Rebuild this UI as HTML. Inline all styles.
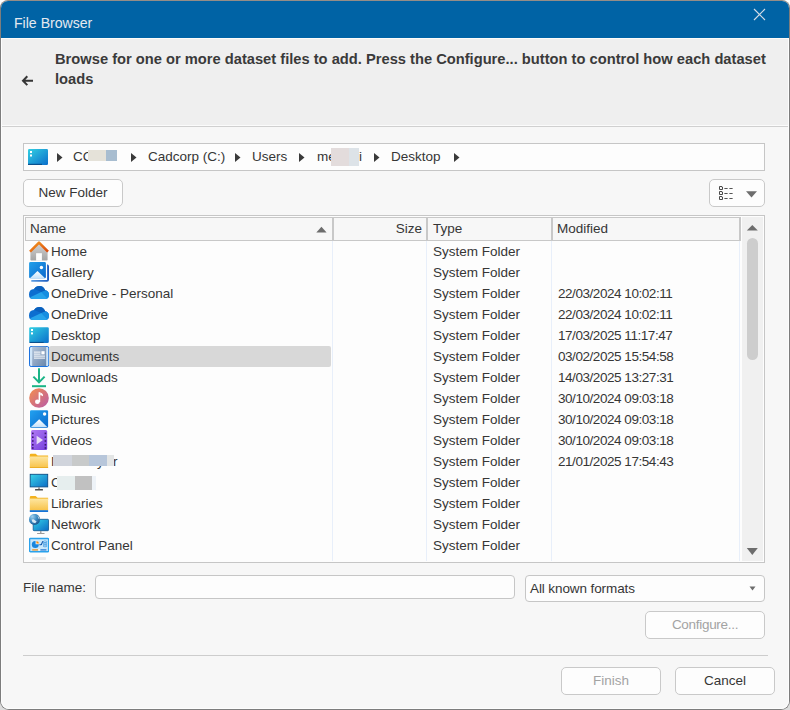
<!DOCTYPE html>
<html><head><meta charset="utf-8">
<style>
*{margin:0;padding:0;box-sizing:border-box}
html,body{width:790px;height:710px;overflow:hidden;background:#fff}
body{font-family:"Liberation Sans",sans-serif;font-size:13.5px;color:#363636;position:relative}
.a{position:absolute}
#win{left:0;top:0;width:790px;height:710px;border:1px solid #7d7d7d;border-top-color:#958d87;border-radius:8px 8px 9px 9px;overflow:hidden;background:#f7f7f7}
#title{left:1px;top:1px;width:788px;height:37px;background:#0063a5;border-radius:7px 7px 0 0}
#title .t{left:13px;top:14px;font-size:14.1px;color:#e4e9f0;line-height:17px}
#hdr{left:1px;top:38px;width:788px;height:88px;background:#efefef;border-top:1px solid #fdfbf8;border-bottom:1px solid #fbfbfb;box-shadow:0 1px 0 #d0d0d0}
#hl{left:0;top:124px;width:788px;height:1px;background:#fcfcfc}
.bold{font-weight:bold;font-size:14.7px;color:#3a3a3a;line-height:20px}
.box{background:#fdfdfd;border:1px solid #c6c6c6}
.btn{background:#fdfdfd;border:1px solid #c9c9c9;border-radius:5px;text-align:center;line-height:26px}
.tri-r{width:0;height:0;border-top:4.5px solid transparent;border-bottom:4.5px solid transparent;border-left:5px solid #3c3c3c}
.row{left:0;height:21px;width:738px}
.row .ic{left:4px;top:0;width:20px;height:20px}
.row .n{left:26px;top:2px;line-height:17px;white-space:nowrap}
.row .ty{left:408px;top:2px;line-height:17px}
.row .md{left:533px;top:2px;line-height:17px}
.hd{line-height:17px;white-space:nowrap}
.rt{line-height:17px;white-space:nowrap}
</style></head><body>
<div class="a" style="left:0;top:700px;width:12px;height:10px;background:#dcdcdc"></div>
<div class="a" style="left:778px;top:700px;width:12px;height:10px;background:#dcdcdc"></div>
<div id="win" class="a"></div>
  <div id="title" class="a"><div class="t a">File Browser</div>
    <svg class="a" style="left:752px;top:7px" width="13" height="13" viewBox="0 0 13 13"><path d="M1 1L12 12M12 1L1 12" stroke="#d3dce7" stroke-width="1.15"/></svg>
  </div>
  <div id="hdr" class="a"></div>
  <div class="a" style="left:1px;top:38px;width:788px;height:671px;border:1px solid #fdfdfd;border-top:none;border-radius:0 0 8px 8px"></div>
  <div class="a bold" style="left:55px;top:49px;width:730px">Browse for one or more dataset files to add. Press the Configure... button to control how each dataset loads</div>

  <svg class="a" style="left:20px;top:74px" width="16" height="14" viewBox="20 74 16 14"><path d="M33 80.7H23.6M27.3 76.3L23 80.7L27.3 85.1" fill="none" stroke="#363636" stroke-width="2"/></svg>
  <!-- breadcrumb -->
  <div class="a box" style="left:23px;top:143px;width:742px;height:28px"></div>
  <svg class="a" style="left:27px;top:148px" width="22" height="18" viewBox="27 148 22 18">
    <defs><linearGradient id="dg" x1="0" y1="0" x2="1" y2="1"><stop offset="0" stop-color="#33d0e2"/><stop offset="1" stop-color="#0b6ecb"/></linearGradient></defs>
    <rect x="28" y="149" width="20" height="16" rx="1.2" fill="url(#dg)"/>
    <rect x="28" y="163.8" width="14" height="1.2" fill="#0a4f8c"/>
    <rect x="30" y="151" width="2" height="2" fill="#fff"/><rect x="30" y="154.5" width="2" height="2" fill="#fff"/>
  </svg>
  <svg class="a" style="left:57px;top:152px" width="7" height="11" viewBox="57 152 7 11"><path d="M57 153L62.5 157.5L57 162Z" fill="#3a3a3a"/></svg>
  <div class="a" style="left:73px;top:148px;line-height:17px">CC</div>
  <div class="a" style="left:88px;top:150px;width:18px;height:11px;background:#e5e2d9"></div>
  <div class="a" style="left:106px;top:150px;width:11px;height:11px;background:#a8bdd0"></div>
  <svg class="a" style="left:131px;top:152px" width="7" height="11" viewBox="131 152 7 11"><path d="M131 153L136.5 157.5L131 162Z" fill="#3a3a3a"/></svg>
  <div class="a" style="left:148px;top:148px;line-height:17px">Cadcorp (C:)</div>
  <svg class="a" style="left:235px;top:152px" width="7" height="11" viewBox="235 152 7 11"><path d="M235 153L240.5 157.5L235 162Z" fill="#3a3a3a"/></svg>
  <div class="a" style="left:252px;top:148px;line-height:17px">Users</div>
  <svg class="a" style="left:299px;top:152px" width="7" height="11" viewBox="299 152 7 11"><path d="M299 153L304.5 157.5L299 162Z" fill="#3a3a3a"/></svg>
  <div class="a" style="left:317px;top:148px;line-height:17px">me</div>
  <div class="a" style="left:331px;top:148px;width:18px;height:18px;background:#e3dcdc"></div>
  <div class="a" style="left:349px;top:148px;width:10px;height:18px;background:#dde3e8"></div>
  <div class="a" style="left:359px;top:148px;line-height:17px">i</div>
  <svg class="a" style="left:374px;top:152px" width="7" height="11" viewBox="374 152 7 11"><path d="M374 153L379.5 157.5L374 162Z" fill="#3a3a3a"/></svg>
  <div class="a" style="left:391px;top:148px;line-height:17px">Desktop</div>
  <svg class="a" style="left:454px;top:152px" width="7" height="11" viewBox="454 152 7 11"><path d="M454 153L459.5 157.5L454 162Z" fill="#3a3a3a"/></svg>
  <!-- toolbar -->
  <div class="a btn" style="left:23px;top:179px;width:100px;height:28px">New Folder</div>
  <div class="a btn" style="left:709px;top:179px;width:56px;height:28px"></div>
  <svg class="a" style="left:717px;top:185px" width="42" height="16" viewBox="717 185 42 16">
    <path d="M719.5 186.5H722L722.5 187V189.5H719.5Z M721.6 187L722.3 187.7 M719.5 191.5H722L722.5 192V194.5H719.5Z M721.6 192L722.3 192.7 M719.5 196.5H722L722.5 197V199.5H719.5Z M721.6 197L722.3 197.7 " fill="none" stroke="#4a4a4a" stroke-width="1"/>
    <g fill="#555"><rect x="724.2" y="188" width="3.6" height="1" rx=".4"/><rect x="729.2" y="188" width="3.6" height="1" rx=".4"/><rect x="724.2" y="193" width="3.6" height="1" rx=".4"/><rect x="729.2" y="193" width="3.6" height="1" rx=".4"/><rect x="724.2" y="198" width="3.6" height="1" rx=".4"/><rect x="729.2" y="198" width="3.6" height="1" rx=".4"/></g>
    <path d="M746 191.3h11l-5.5 6.2z" fill="#6d6d6d"/>
  </svg>
<!-- list -->
<div class="a box" style="left:23px;top:215px;width:742px;height:348px;background:#fdfdfd"></div>
<div class="a" style="left:25px;top:217px;width:716px;height:24px;background:#f7f7f7;border:1px solid #c8c8c8"></div>
<div class="a" style="left:332px;top:217px;width:2px;height:24px;background:#c8c8c8"></div>
<div class="a" style="left:332px;top:241px;width:1px;height:320px;background:#e8effa"></div>
<div class="a" style="left:426px;top:217px;width:2px;height:24px;background:#c8c8c8"></div>
<div class="a" style="left:426px;top:241px;width:1px;height:320px;background:#e8effa"></div>
<div class="a" style="left:551px;top:217px;width:2px;height:24px;background:#c8c8c8"></div>
<div class="a" style="left:551px;top:241px;width:1px;height:320px;background:#e8effa"></div>
<div class="a" style="left:739px;top:217px;width:2px;height:24px;background:#c8c8c8"></div>
<div class="a" style="left:739px;top:241px;width:1px;height:320px;background:#e8effa"></div>
<div class="a hd" style="left:30px;top:220px">Name</div>
<svg class="a" style="left:315px;top:226px" width="13" height="8" viewBox="315 226 13 8"><path d="M316.3 232.6H326.6L321.45 226.7Z" fill="#6d6d6d"/></svg>
<div class="a hd" style="left:334px;top:220px;width:88px;text-align:right">Size</div>
<div class="a hd" style="left:433px;top:220px">Type</div>
<div class="a hd" style="left:557px;top:220px">Modified</div>
<div class="a" style="left:742px;top:217px;width:21px;height:344px;background:#f0f0f0"></div>
<svg class="a" style="left:745px;top:223px" width="15" height="10" viewBox="745 223 15 10"><path d="M746.8 230.5H757.8L752.3 224.9Z" fill="#6d6d6d"/></svg>
<div class="a" style="left:747px;top:238px;width:11px;height:122px;background:#cdcdcd;border-radius:5.5px"></div>
<svg class="a" style="left:745px;top:546px" width="15" height="10" viewBox="745 546 15 10"><path d="M746.8 548H757.8L752.3 555Z" fill="#6d6d6d"/></svg>
<div class="a" style="left:49px;top:346px;width:282px;height:21px;background:#d8d8d8;border-radius:2px"></div>
<svg class="a" style="left:29px;top:241px" width="20" height="21" viewBox="0 0 20 21"><defs><linearGradient id="hg" x1="0" y1="0" x2="0" y2="1"><stop offset="0" stop-color="#d2d2d2"/><stop offset="1" stop-color="#a4a4a4"/></linearGradient><linearGradient id="hr" x1="0" y1="0" x2="1" y2="1"><stop offset="0" stop-color="#f59a20"/><stop offset="1" stop-color="#d9480c"/></linearGradient></defs>
<path d="M10 2.5L18.6 10.5V18.8Q18.6 19.6 17.8 19.6H2.2Q1.4 19.6 1.4 18.8V10.5Z" fill="url(#hg)"/><rect x="7.1" y="12.2" width="5.8" height="7.5" fill="#fdfdfd"/>
<path d="M1 10.6L10 1.6L19 10.6" fill="none" stroke="url(#hr)" stroke-width="2.6" stroke-linejoin="round"/></svg>
<div class="a rt" style="left:51px;top:243px">Home</div>
<div class="a rt" style="left:433px;top:243px">System Folder</div>
<svg class="a" style="left:29px;top:262px" width="20" height="21" viewBox="0 0 20 21"><defs><linearGradient id="gg" x1="0" y1="0" x2="1" y2="1"><stop offset="0" stop-color="#22a0ea"/><stop offset="1" stop-color="#0a66cc"/></linearGradient><linearGradient id="gm" x1="0" y1="0" x2="0" y2="1"><stop offset="0" stop-color="#ffffff"/><stop offset="1" stop-color="#c4e2fa"/></linearGradient><linearGradient id="gb" x1="0" y1="0" x2="1" y2="0"><stop offset="0" stop-color="#5d9de2"/><stop offset="1" stop-color="#1758bd"/></linearGradient></defs>
<path d="M18.1 2.3Q20 2.6 20 4.5V17.8Q20 19.7 18.1 19.7H2.3L2.3 17.9H18.1Z" fill="url(#gb)"/>
<rect x="0.1" y="0.1" width="16.8" height="16.2" rx="1.4" fill="url(#gg)"/>
<path d="M0.9 16.3L8.5 8.9L16.1 16.3Z" fill="url(#gm)"/><circle cx="12.4" cy="5.5" r="1.7" fill="#fff"/></svg>
<div class="a rt" style="left:51px;top:264px">Gallery</div>
<div class="a rt" style="left:433px;top:264px">System Folder</div>
<svg class="a" style="left:29px;top:283px" width="20" height="21" viewBox="0 0 20 21"><defs><clipPath id="oc"><path d="M4.2 16Q0 16 0 11.4Q0 6.6 5 6.1Q6.8 2.9 10.5 2.9Q14.6 2.9 16.2 7.2Q20 7.8 20 11.8Q20 16 16.2 16Z"/></clipPath></defs>
<g clip-path="url(#oc)"><rect x="0" y="0" width="20" height="20" fill="#0c6ed0"/>
<path d="M4 0H20V7.4L16.4 7.6L12.3 8.9L5.2 6.1Z" fill="#0a60bd"/>
<path d="M12.3 8.9L16.4 7.6L20 7.2V16.5L18 14.8Z" fill="#168ee0"/>
<path d="M0 17L1.8 14L12.3 8.9L18 14.8L20 17Z" fill="#26a3ea"/></g></svg>
<div class="a rt" style="left:51px;top:285px">OneDrive - Personal</div>
<div class="a rt" style="left:433px;top:285px">System Folder</div>
<div class="a rt" style="left:558px;top:285px;letter-spacing:-0.45px">22/03/2024 10:02:11</div>
<svg class="a" style="left:29px;top:304px" width="20" height="21" viewBox="0 0 20 21"><defs><clipPath id="oc"><path d="M4.2 16Q0 16 0 11.4Q0 6.6 5 6.1Q6.8 2.9 10.5 2.9Q14.6 2.9 16.2 7.2Q20 7.8 20 11.8Q20 16 16.2 16Z"/></clipPath></defs>
<g clip-path="url(#oc)"><rect x="0" y="0" width="20" height="20" fill="#0c6ed0"/>
<path d="M4 0H20V7.4L16.4 7.6L12.3 8.9L5.2 6.1Z" fill="#0a60bd"/>
<path d="M12.3 8.9L16.4 7.6L20 7.2V16.5L18 14.8Z" fill="#168ee0"/>
<path d="M0 17L1.8 14L12.3 8.9L18 14.8L20 17Z" fill="#26a3ea"/></g></svg>
<div class="a rt" style="left:51px;top:306px">OneDrive</div>
<div class="a rt" style="left:433px;top:306px">System Folder</div>
<div class="a rt" style="left:558px;top:306px;letter-spacing:-0.45px">22/03/2024 10:02:11</div>
<svg class="a" style="left:29px;top:325px" width="20" height="21" viewBox="0 0 20 21"><defs><linearGradient id="dk" x1="0" y1="0" x2="1" y2="1"><stop offset="0" stop-color="#33d0e2"/><stop offset="1" stop-color="#0b6ecb"/></linearGradient></defs>
<rect x="0.2" y="2.2" width="19.6" height="15.8" rx="1.3" fill="url(#dk)"/><rect x="0.6" y="16.9" width="14" height="1.1" fill="#0a4f8c"/>
<rect x="2" y="4" width="2" height="2" fill="#fff"/><rect x="2" y="7.4" width="2" height="2" fill="#fff"/></svg>
<div class="a rt" style="left:51px;top:327px">Desktop</div>
<div class="a rt" style="left:433px;top:327px">System Folder</div>
<div class="a rt" style="left:558px;top:327px;letter-spacing:-0.45px">17/03/2025 11:17:47</div>
<svg class="a" style="left:29px;top:346px" width="20" height="21" viewBox="0 0 20 21"><defs><linearGradient id="dc" x1="0" y1="0" x2="1" y2="1"><stop offset="0" stop-color="#b2c4da"/><stop offset="1" stop-color="#6a86ab"/></linearGradient></defs>
<rect x="0.5" y="0.5" width="19.3" height="20" rx="1.6" fill="#cfe5f9" stroke="#1b72e0" stroke-width="1"/>
<rect x="3.2" y="0.6" width="14" height="19.4" fill="url(#dc)"/>
<g fill="#fff"><rect x="5" y="5.6" width="6.5" height="1"/><rect x="5" y="7.6" width="6.5" height="1"/><rect x="5" y="9.6" width="11" height="1"/><rect x="5" y="11.6" width="11" height="1"/><rect x="12.4" y="5.2" width="3.2" height="3.2"/></g></svg>
<div class="a rt" style="left:51px;top:348px">Documents</div>
<div class="a rt" style="left:433px;top:348px">System Folder</div>
<div class="a rt" style="left:558px;top:348px;letter-spacing:-0.45px">03/02/2025 15:54:58</div>
<svg class="a" style="left:29px;top:367px" width="20" height="21" viewBox="0 0 20 21"><g fill="none" stroke="#1ab486" stroke-width="2"><path d="M10 1.2V15.4"/><path d="M4.4 9.6L10 15.4L15.6 9.6"/><path d="M3 19.2H17"/></g></svg>
<div class="a rt" style="left:51px;top:369px">Downloads</div>
<div class="a rt" style="left:433px;top:369px">System Folder</div>
<div class="a rt" style="left:558px;top:369px;letter-spacing:-0.45px">14/03/2025 13:27:31</div>
<svg class="a" style="left:29px;top:388px" width="20" height="21" viewBox="0 0 20 21"><defs><linearGradient id="mu" x1="0" y1="0" x2="1" y2="1"><stop offset="0" stop-color="#f58f4c"/><stop offset="1" stop-color="#b85aa8"/></linearGradient></defs>
<circle cx="10" cy="10" r="9.8" fill="url(#mu)"/>
<g fill="#fff"><ellipse cx="8.4" cy="13.8" rx="2.4" ry="2.2"/><rect x="9.6" y="4.2" width="1.6" height="9.8"/><path d="M9.6 4.2Q13 4.2 14 6.8V8.2Q12.4 7 11.2 7.2V4.2Z"/></g></svg>
<div class="a rt" style="left:51px;top:390px">Music</div>
<div class="a rt" style="left:433px;top:390px">System Folder</div>
<div class="a rt" style="left:558px;top:390px;letter-spacing:-0.45px">30/10/2024 09:03:18</div>
<svg class="a" style="left:29px;top:409px" width="20" height="21" viewBox="0 0 20 21"><defs><linearGradient id="pg" x1="0" y1="0" x2="1" y2="1"><stop offset="0" stop-color="#22a2f0"/><stop offset="1" stop-color="#0b68cc"/></linearGradient><linearGradient id="pm" x1="0" y1="0" x2="0" y2="1"><stop offset="0" stop-color="#ffffff"/><stop offset="1" stop-color="#c6e2fa"/></linearGradient></defs>
<rect x="1" y="1.3" width="18.1" height="17.4" rx="1.2" fill="url(#pg)"/>
<path d="M2 18L10.2 10.2L18.2 18Z" fill="url(#pm)"/><circle cx="15.6" cy="5" r="1.7" fill="#fff"/></svg>
<div class="a rt" style="left:51px;top:411px">Pictures</div>
<div class="a rt" style="left:433px;top:411px">System Folder</div>
<div class="a rt" style="left:558px;top:411px;letter-spacing:-0.45px">30/10/2024 09:03:18</div>
<svg class="a" style="left:29px;top:430px" width="20" height="21" viewBox="0 0 20 21"><defs><linearGradient id="vg" x1="0" y1="0" x2="1" y2="1"><stop offset="0" stop-color="#b27af4"/><stop offset="1" stop-color="#7440dc"/></linearGradient></defs>
<rect x="2" y="0.1" width="16.2" height="19.9" rx="1.5" fill="url(#vg)"/>
<g fill="#3d1a70"><rect x="3" y="2.6" width="1.6" height="1.6"/><rect x="3" y="6.4" width="1.6" height="1.6"/><rect x="3" y="10.2" width="1.6" height="1.6"/><rect x="3" y="14" width="1.6" height="1.6"/><rect x="3" y="17.2" width="1.6" height="1.6"/>
<rect x="15.6" y="2.6" width="1.6" height="1.6"/><rect x="15.6" y="6.4" width="1.6" height="1.6"/><rect x="15.6" y="10.2" width="1.6" height="1.6"/><rect x="15.6" y="14" width="1.6" height="1.6"/><rect x="15.6" y="17.2" width="1.6" height="1.6"/></g>
<path d="M7.6 5.8V14.4L14 10.1Z" fill="#e6dcf6"/></svg>
<div class="a rt" style="left:51px;top:432px">Videos</div>
<div class="a rt" style="left:433px;top:432px">System Folder</div>
<div class="a rt" style="left:558px;top:432px;letter-spacing:-0.45px">30/10/2024 09:03:18</div>
<svg class="a" style="left:29px;top:451px" width="20" height="21" viewBox="0 0 20 21"><defs><linearGradient id="fg" x1="0" y1="0" x2="0" y2="1"><stop offset="0" stop-color="#fde6a0"/><stop offset="1" stop-color="#f8c247"/></linearGradient></defs>
<path d="M0.8 4Q0.8 2.8 2 2.8H6.6L8.6 4.6H19.1V7H0.8Z" fill="#f3b21f"/>
<rect x="0.8" y="5.4" width="18.3" height="11.6" rx="0.6" fill="url(#fg)"/><rect x="0.8" y="16.2" width="18.3" height="0.8" fill="#eaa91c"/></svg>
<div class="a rt" style="left:51px;top:453px">M</div>
<div class="a rt" style="left:97px;top:453px">y</div>
<div class="a rt" style="left:113px;top:453px">r</div>
<div class="a" style="left:53px;top:455px;width:19px;height:11px;background:#d0d4dc"></div>
<div class="a" style="left:72px;top:455px;width:17px;height:11px;background:#c8caca"></div>
<div class="a" style="left:89px;top:455px;width:18px;height:11px;background:#b7c6da"></div>
<div class="a" style="left:107px;top:455px;width:7px;height:11px;background:#e3e5e5"></div>
<div class="a rt" style="left:433px;top:453px">System Folder</div>
<div class="a rt" style="left:558px;top:453px;letter-spacing:-0.45px">21/01/2025 17:54:43</div>
<svg class="a" style="left:29px;top:472px" width="20" height="21" viewBox="0 0 20 21"><defs><linearGradient id="mn" x1="0" y1="0" x2="1" y2="1"><stop offset="0" stop-color="#3ad4e8"/><stop offset="1" stop-color="#0c6cc6"/></linearGradient></defs>
<rect x="1.2" y="2.3" width="17.5" height="12.6" fill="url(#mn)" stroke="#0d4d85" stroke-width="0.9"/>
<rect x="9.2" y="15.2" width="1.6" height="2" fill="#8a8a8a"/><rect x="6" y="17.1" width="8" height="1.5" rx="0.5" fill="#4a4a4a"/></svg>
<div class="a rt" style="left:51px;top:474px">C</div>
<div class="a" style="left:57px;top:476px;width:18px;height:14px;background:#e6eeee"></div>
<div class="a" style="left:75px;top:476px;width:17px;height:14px;background:#c1c1c1"></div>
<div class="a" style="left:92px;top:476px;width:4px;height:14px;background:#eef3f8"></div>
<div class="a rt" style="left:433px;top:474px">System Folder</div>
<svg class="a" style="left:29px;top:493px" width="20" height="21" viewBox="0 0 20 21"><defs><linearGradient id="lg" x1="0" y1="0" x2="0" y2="1"><stop offset="0" stop-color="#fde6a0"/><stop offset="1" stop-color="#f8c247"/></linearGradient></defs>
<path d="M0.8 4.2Q0.8 3 2 3H6.6L8.6 4.8H19.1V7H0.8Z" fill="#f3b21f"/>
<rect x="0.8" y="5.6" width="18.3" height="12" fill="url(#lg)"/><rect x="0.8" y="17.2" width="18.3" height="1.8" fill="#1574d8"/></svg>
<div class="a rt" style="left:51px;top:495px">Libraries</div>
<div class="a rt" style="left:433px;top:495px">System Folder</div>
<svg class="a" style="left:29px;top:514px" width="20" height="21" viewBox="0 0 20 21"><defs><linearGradient id="nm" x1="0" y1="0" x2="1" y2="1"><stop offset="0" stop-color="#34d2e8"/><stop offset="1" stop-color="#0b6ac4"/></linearGradient><radialGradient id="ng" cx="0.3" cy="0.25" r="0.85"><stop offset="0" stop-color="#9fd0ee"/><stop offset="0.5" stop-color="#3d8cc4"/><stop offset="1" stop-color="#1a5288"/></radialGradient></defs>
<rect x="4.2" y="5.3" width="15.3" height="11.4" rx="0.8" fill="url(#nm)" stroke="#0d5590" stroke-width="0.8"/>
<rect x="11" y="17" width="1.5" height="2.2" fill="#a4a4a4"/><rect x="8" y="19" width="7.6" height="1.1" rx="0.5" fill="#9a9a9a"/>
<circle cx="5.5" cy="5.4" r="5.5" fill="url(#ng)"/><path d="M2.6 5.6L4.6 5.2L7.6 7.6L6.2 9.2L3.4 8.2Z" fill="#e6f2fa" opacity="0.9"/><path d="M8.4 1.6Q10.2 2.8 10.6 5.4L9.4 4.6Z" fill="#d8ecf8" opacity="0.8"/></svg>
<div class="a rt" style="left:51px;top:516px">Network</div>
<div class="a rt" style="left:433px;top:516px">System Folder</div>
<svg class="a" style="left:29px;top:535px" width="20" height="21" viewBox="0 0 20 21"><rect x="0.6" y="3.5" width="19" height="13.2" rx="0.8" fill="#c8e7fb" stroke="#2aa2ec" stroke-width="1.4"/>
<circle cx="6.3" cy="9.5" r="3.5" fill="#1a86dc"/><path d="M6.6 9.2V5.7A3.5 3.5 0 0 1 10.1 9.2Z" fill="#fff"/><path d="M7.4 8.5V6A2.6 2.6 0 0 1 10 8.5Z" fill="#f08a10"/>
<path d="M10.4 9.8H11.8Q12.6 9.8 12.8 8.6L13.2 7.4Q13.4 6.6 14.4 6.6" fill="none" stroke="#0c50a8" stroke-width="1.1"/>
<g fill="#fff" stroke="#1a86dc" stroke-width="0.7"><rect x="14.4" y="6.1" width="3.4" height="1.5" rx="0.7"/><rect x="14.4" y="8.2" width="3.4" height="1.5" rx="0.7"/><rect x="14.4" y="10.2" width="3.4" height="1.5" rx="0.7"/></g>
<rect x="3.2" y="14.3" width="6" height="1.2" fill="#f08a10"/><rect x="9.2" y="14.3" width="1.8" height="1.2" fill="#fff"/><rect x="11.4" y="14.3" width="6" height="1.2" fill="#1a70d0"/></svg>
<div class="a rt" style="left:51px;top:537px">Control Panel</div>
<div class="a rt" style="left:433px;top:537px">System Folder</div>
<div class="a" style="left:32px;top:557px;width:14px;height:3px;background:#e2e2e2;border-radius:1px;opacity:.7"></div>
<!-- /list -->
  <!-- bottom -->
  <div class="a" style="left:23px;top:579px;line-height:17px">File name:</div>
  <div class="a box" style="left:95px;top:575px;width:420px;height:24px;border-radius:4px"></div>
  <div class="a box" style="left:525px;top:575px;width:240px;height:27px;border-radius:4px"></div>
  <div class="a" style="left:530px;top:580px;line-height:17px;letter-spacing:-0.1px">All known formats</div>
  <svg class="a" style="left:748px;top:585px" width="9" height="7" viewBox="748 585 9 7"><path d="M749.5 586.5h6l-3 4z" fill="#6d6d6d"/></svg>
  <div class="a btn" style="left:645px;top:611px;width:120px;height:28px;color:#a3a3a3;letter-spacing:-0.3px">Configure...</div>
  <div class="a" style="left:23px;top:655px;width:745px;height:1px;background:#cdcdcd"></div>
  <div class="a btn" style="left:561px;top:667px;width:100px;height:28px;color:#a3a3a3">Finish</div>
  <div class="a btn" style="left:675px;top:667px;width:100px;height:28px">Cancel</div>

</body></html>
